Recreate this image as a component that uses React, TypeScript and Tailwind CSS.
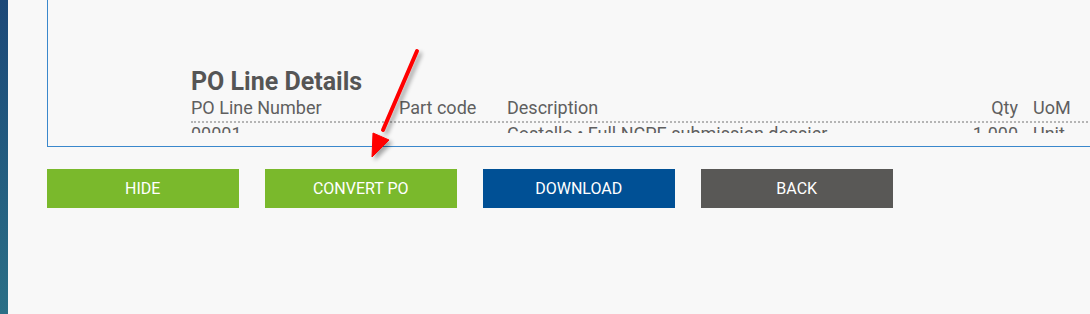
import React from 'react';

const columns = 'grid grid-cols-[208px_108px_453px_58px_120px]';

function Arrow() {
  return (
    <svg
      className="absolute left-0 top-0 pointer-events-none"
      width="1090"
      height="314"
      viewBox="0 0 1090 314"
    >
      <defs>
        <filter id="arrowShadow" x="-50%" y="-50%" width="200%" height="200%">
          <feGaussianBlur in="SourceAlpha" stdDeviation="2" />
          <feOffset dx="3" dy="3" result="blur" />
          <feComponentTransfer>
            <feFuncA type="linear" slope="0.35" />
          </feComponentTransfer>
          <feMerge>
            <feMergeNode />
            <feMergeNode in="SourceGraphic" />
          </feMerge>
        </filter>
      </defs>
      <g filter="url(#arrowShadow)" fill="#ff0000" stroke="#ff0000">
        <line x1="417" y1="51" x2="383" y2="130" strokeWidth="4" strokeLinecap="round" />
        <polygon points="372,157 373,133 389,140" strokeWidth="1" strokeLinejoin="round" />
      </g>
    </svg>
  );
}

export default function App() {
  const buttons = [
    { label: 'HIDE', color: 'bg-[#7ab92c]' },
    { label: 'CONVERT PO', color: 'bg-[#7ab92c]' },
    { label: 'DOWNLOAD', color: 'bg-[#005095]' },
    { label: 'BACK', color: 'bg-[#595856]' },
  ];

  return (
    <div className="relative flex h-[314px] w-[1090px] overflow-hidden bg-[#f8f8f8] font-['Roboto',sans-serif]">
      <div className="w-[8px] shrink-0 bg-gradient-to-b from-[#1c4878] to-[#2b6f86]" />

      <div className="flex flex-col">
        <div className="ml-[39px] h-[147px] w-[1200px] shrink-0 border-b border-l border-[#3a88cc] pl-[143px] pt-[68px]">
          {/* scroll area of the details box, cut off mid-row */}
          <div className="h-[65px] overflow-hidden">
            <h2 className="text-[25px] font-bold leading-[28px] text-[#555555]">PO Line Details</h2>
            <div className={`${columns} mt-px border-b-2 border-dotted border-[#b5b5b5] pb-[2px] text-[18px] leading-[22px] text-[#5f5f5f]`}>
              <div>PO Line Number</div>
              <div>Part code</div>
              <div>Description</div>
              <div className="text-right">Qty</div>
              <div className="pl-[15px]">UoM</div>
            </div>
            <div className={`${columns} text-[18px] leading-[22px] text-[#5f5f5f]`}>
              <div>00001</div>
              <div></div>
              <div>Costello • Full NCPE submission dossier</div>
              <div className="text-right">1.000</div>
              <div className="pl-[15px]">Unit</div>
            </div>
          </div>
        </div>

        <div className="ml-[39px] mt-[22px] flex gap-[26.5px]">
          {buttons.map((b) => (
            <button
              key={b.label}
              className={`${b.color} flex h-[39px] w-[191.5px] items-center justify-center text-[16px] text-white`}
            >
              {b.label}
            </button>
          ))}
        </div>
      </div>

      <Arrow />
    </div>
  );
}
